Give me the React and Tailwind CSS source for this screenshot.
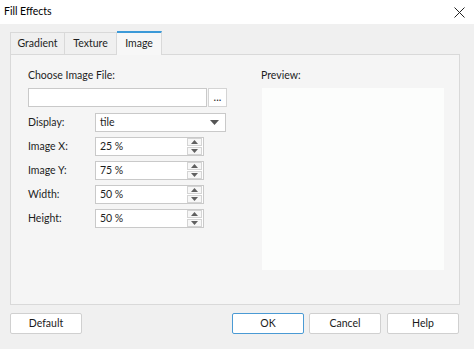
import React from 'react';

const font = { fontFamily: 'Lato, "Noto Sans", sans-serif' };

const Spinner = () => (
  <div className="flex flex-col gap-[1px] mr-[1px]">
    <div className="w-[15px] h-[8px] border border-[#d4d4d4] bg-[#f7f7f7] flex items-center justify-center">
      <svg width="7" height="4" viewBox="0 0 7 4"><path d="M0 4 L3.5 0 L7 4 Z" fill="#606060" /></svg>
    </div>
    <div className="w-[15px] h-[8px] border border-[#d4d4d4] bg-[#f7f7f7] flex items-center justify-center">
      <svg width="7" height="4" viewBox="0 0 7 4"><path d="M0 0 L3.5 4 L7 0 Z" fill="#606060" /></svg>
    </div>
  </div>
);

const SpinRow = ({ label, value }) => (
  <div className="flex items-center h-[19px]">
    <div className="w-[67px]">{label}</div>
    <div className="w-[109px] h-[19px] bg-white border border-[#c9c9c9] flex items-center justify-between pl-[4px]">
      <span>{value}</span>
      <Spinner />
    </div>
  </div>
);

const Btn = ({ children, primary, className = '' }) => (
  <button
    className={`h-[21px] w-[72px] bg-white border rounded-[2px] text-[10.5px] text-[#1a1a1a] flex items-center justify-center ${primary ? 'border-[#4a9ad4]' : 'border-[#d0d0d0]'} ${className}`}
  >
    {children}
  </button>
);

export default function App() {
  return (
    <div className="w-[474px] h-[349px] bg-[#f0f0f0] text-[10.5px] text-[#1e1e1e] flex flex-col" style={font}>
      {/* title bar */}
      <div className="h-[24px] bg-white flex items-center justify-between pl-[4px] pr-[9px] shrink-0">
        <span className="text-[10.5px] text-black">Fill Effects</span>
        <svg width="11" height="11" viewBox="0 0 11 11">
          <path d="M0.5 0.5 L10.5 10.5 M10.5 0.5 L0.5 10.5" stroke="#222" strokeWidth="1" />
        </svg>
      </div>

      <div className="pl-[10px] pr-[14px] pt-[7px]">
        {/* tabs */}
        <div className="flex items-end h-[23px]">
          <div className="h-[22px] w-[55px] border border-b-0 border-[#d9d9d9] bg-[#f0f0f0] flex items-center justify-center">Gradient</div>
          <div className="h-[22px] w-[52px] border border-b-0 border-l-0 border-[#d9d9d9] bg-[#f0f0f0] flex items-center justify-center">Texture</div>
          <div className="h-[24px] w-[45px] border-t-2 border-t-[#3c9ad8] border-r border-[#d9d9d9] bg-[#f7f7f7] flex items-center justify-center -mb-[1px] relative z-10">Image</div>
        </div>

        {/* panel */}
        <div className="h-[251px] border border-[#d9d9d9] bg-[#f5f5f5] flex pl-[17px] pt-[13px]">
          <div className="w-[199px] flex flex-col">
            <div className="h-[14px] leading-[14px]">Choose Image File:</div>
            <div className="flex mt-[6px] h-[19px]">
              <div className="w-[179px] bg-white border border-[#c9c9c9]" />
              <div className="w-[19px] ml-[1px] bg-white border border-[#d4d4d4] flex items-center justify-center text-[11px] leading-none pb-[2px]">...</div>
            </div>
            <div className="flex items-center h-[19px] mt-[6px]">
              <div className="w-[67px]">Display:</div>
              <div className="w-[131px] h-[19px] bg-white border border-[#c9c9c9] flex items-center justify-between pl-[4px] pr-[6px]">
                <span>tile</span>
                <svg width="9" height="5" viewBox="0 0 9 5"><path d="M0 0 L4.5 5 L9 0 Z" fill="#555" /></svg>
              </div>
            </div>
            <div className="flex flex-col gap-[5px] mt-[5px]">
              <SpinRow label="Image X:" value="25 %" />
              <SpinRow label="Image Y:" value="75 %" />
              <SpinRow label="Width:" value="50 %" />
              <SpinRow label="Height:" value="50 %" />
            </div>
          </div>
          <div className="ml-[35px] flex flex-col">
            <div className="h-[14px] leading-[14px] -ml-[1px]">Preview:</div>
            <div className="w-[182px] h-[182px] bg-[#fcfdfc] mt-[6px]" />
          </div>
        </div>

        {/* buttons */}
        <div className="flex items-center mt-[8px]">
          <Btn>Default</Btn>
          <div className="flex-1" />
          <Btn primary>OK</Btn>
          <Btn className="ml-[5px]">Cancel</Btn>
          <Btn className="ml-[6px] mr-[1px]">Help</Btn>
        </div>
      </div>
    </div>
  );
}
